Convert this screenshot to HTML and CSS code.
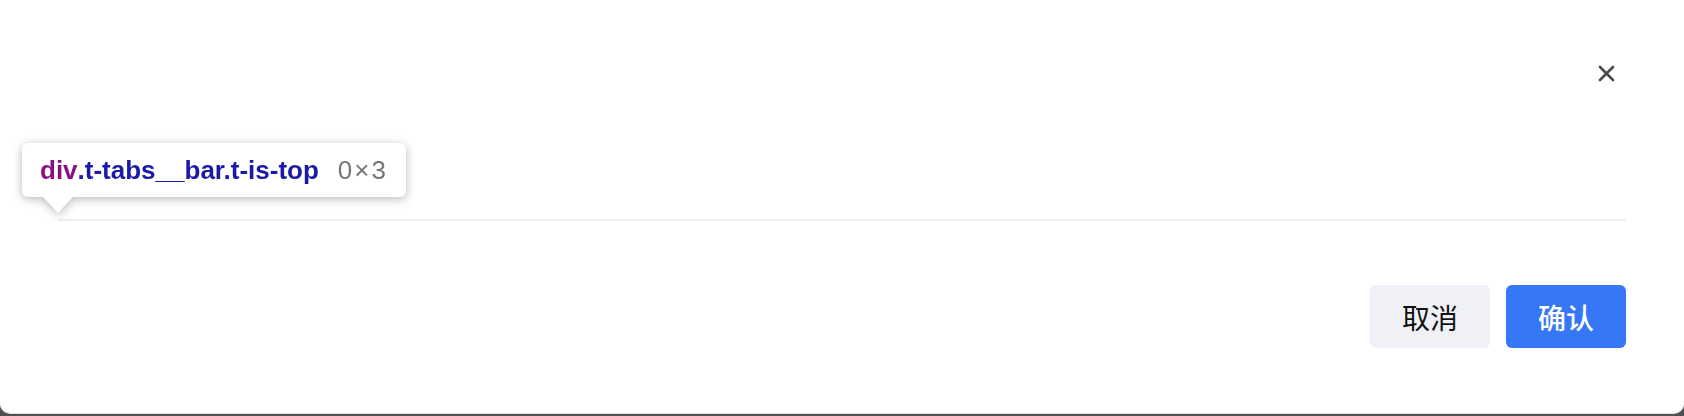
FILE: index.html
```html
<!DOCTYPE html>
<html lang="zh-CN">
<head>
<meta charset="utf-8">
<title>Dialog</title>
<link rel="stylesheet" href="styles.css">
</head>
<body>
<div class="dialog">
  <div class="dialog-header">
    <button class="close-btn" aria-label="关闭">
      <svg width="17" height="17" viewBox="0 0 17 17"><path d="M2 2 L15 15 M15 2 L2 15" stroke="#4a4a4a" stroke-width="2.6" stroke-linecap="round" fill="none"/></svg>
    </button>
  </div>
  <div class="dialog-body">
    <div class="tabs-bar"></div>
  </div>
  <div class="dialog-footer">
    <button class="btn btn-cancel">取消</button>
    <button class="btn btn-confirm">确认</button>
  </div>
</div>
<div class="inspect-tip">
  <div class="tip-box">
    <span class="tip-tag">div</span><span class="tip-cls">.t-tabs__bar.t-is-top</span><span class="tip-dim">0×3</span>
  </div>
  <div class="tip-arrow"></div>
</div>
</body>
</html>
```
FILE: styles.css
```css
html, body {
  margin: 0;
  padding: 0;
}
body {
  width: 1684px;
  height: 416px;
  background: #4f5052;
  overflow: hidden;
  font-family: "Noto Sans CJK SC", "Liberation Sans", sans-serif;
}
.dialog {
  position: relative;
  height: 413px;
  box-sizing: border-box;
  background: #ffffff;
  border-radius: 0 0 10px 10px;
  box-shadow: 0 1px 0 #dfe3e8;
  padding: 0 58px;
  display: flex;
  flex-direction: column;
}
.dialog-header {
  display: flex;
  justify-content: flex-end;
  padding-top: 65px;
  padding-right: 11px;
}
.close-btn {
  width: 17px;
  height: 17px;
  padding: 0;
  border: 0;
  background: none;
  display: block;
}
.close-btn svg {
  display: block;
}
.dialog-body {
  margin-top: 137px;
}
.tabs-bar {
  height: 2px;
  background: #eeeef3;
}
.dialog-footer {
  margin-top: 64px;
  display: flex;
  justify-content: flex-end;
  gap: 16px;
}
.btn {
  width: 120px;
  height: 63px;
  border: 0;
  border-radius: 6px;
  font-family: "Noto Sans CJK SC", sans-serif;
  font-size: 28px;
  padding: 0;
  display: flex;
  align-items: center;
  justify-content: center;
}
.btn-cancel {
  background: #f0f1f6;
  color: #111111;
}
.btn-confirm {
  background: #3677f7;
  color: #ffffff;
  font-weight: 500;
}
.inspect-tip {
  position: absolute;
  left: 22px;
  top: 143px;
  filter: drop-shadow(0 2px 5px rgba(0, 0, 0, 0.28));
}
.tip-box {
  height: 54px;
  box-sizing: border-box;
  padding: 0 18px;
  background: #ffffff;
  border-radius: 6px;
  display: flex;
  align-items: center;
  font-family: "Liberation Sans", Arial, sans-serif;
  font-size: 26px;
  white-space: nowrap;
}
.tip-tag {
  color: #881280;
  font-weight: bold;
}
.tip-cls {
  color: #1a1aa6;
  font-weight: bold;
}
.tip-dim {
  color: #767676;
  margin-left: 19px;
  letter-spacing: 2px;
}
.tip-arrow {
  width: 30px;
  height: 16px;
  margin-left: 21px;
  background: #ffffff;
  clip-path: polygon(0 0, 100% 0, 50% 100%);
}
```
